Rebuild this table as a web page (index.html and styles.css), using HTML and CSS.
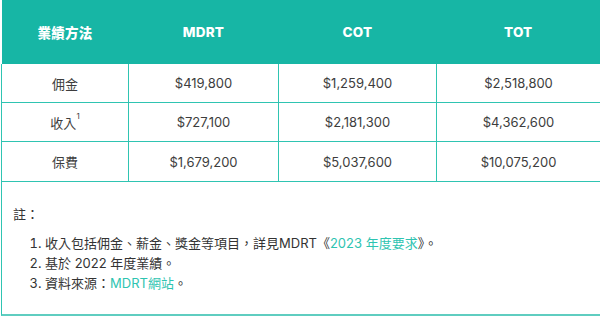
FILE: index.html
```html
<!DOCTYPE html>
<html lang="zh-Hant">
<head>
<meta charset="utf-8">
<link rel="stylesheet" href="styles.css">
</head>
<body>
<div class="wrap">
  <table class="req">
    <colgroup>
      <col class="c1"><col class="c2"><col class="c3"><col class="c4">
    </colgroup>
    <thead>
      <tr><th>業績方法</th><th>MDRT</th><th>COT</th><th>TOT</th></tr>
    </thead>
    <tbody>
      <tr><td>佣金</td><td>$419,800</td><td>$1,259,400</td><td>$2,518,800</td></tr>
      <tr><td>收入<sup>1</sup></td><td>$727,100</td><td>$2,181,300</td><td>$4,362,600</td></tr>
      <tr><td>保費</td><td>$1,679,200</td><td>$5,037,600</td><td>$10,075,200</td></tr>
    </tbody>
  </table>
  <div class="notes">
    <p class="notes-title">註：</p>
    <ol class="notes-list">
      <li>收入包括佣金、薪金、獎金等項目，詳見MDRT《<a href="#">2023 年度要求</a>》。</li>
      <li>基於 2022 年度業績。</li>
      <li>資料來源：<a href="#">MDRT網站</a>。</li>
    </ol>
  </div>
</div>
</body>
</html>
```
FILE: styles.css
```css
html, body {
  margin: 0;
  padding: 0;
  background: #ffffff;
  overflow: hidden;
}
body {
  font-family: Inter, "Noto Sans CJK TC", sans-serif;
  color: #3a3a3a;
}
.wrap {
  margin-left: 1px;
  width: 599px;
}
.req {
  width: 100%;
  border-collapse: collapse;
  table-layout: fixed;
}
.c1 { width: 127px; }
.c2 { width: 150px; }
.c3 { width: 158px; }
.c4 { width: auto; }
.req th {
  background: #17b6a5;
  color: #ffffff;
  font-weight: 800;
  font-size: 13.5px;
  letter-spacing: 0.2px;
  height: 64px;
  padding: 0;
  text-align: center;
  vertical-align: middle;
}
.req td {
  border: 1px solid #2fc4b2;
  font-size: 13px;
  text-align: center;
  vertical-align: middle;
  height: 38px;
  padding: 0;
  color: #3d3d3d;
}
.req tbody tr td:last-child {
  border-right: none;
}
.req tbody tr:first-child td {
  border-top: none;
}
.req tbody tr:last-child td {
  height: 39px;
}
.req sup {
  font-size: 8px;
  vertical-align: top;
  position: relative;
  top: -2px;
}
.notes {
  border-left: 1px solid #2fc4b2;
  border-bottom: 2px solid #5fcdc0;
  height: 134px;
  box-sizing: border-box;
  padding: 23px 0 0 11px;
  font-size: 13px;
  color: #333333;
}
.notes-title {
  margin: 0 0 10px 0;
  line-height: 18px;
}
.notes-list {
  margin: 0;
  padding-left: 32px;
  line-height: 20px;
}
.notes a {
  color: #2ec4b1;
  text-decoration: none;
}
```
